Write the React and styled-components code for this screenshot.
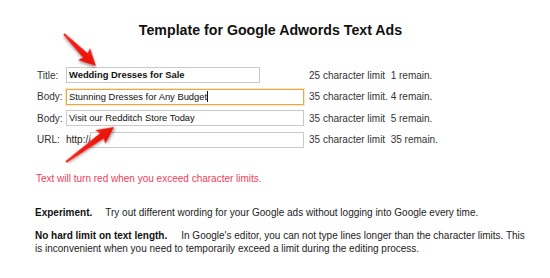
import React from "react";
import styled, { createGlobalStyle } from "styled-components";

const GlobalStyle = createGlobalStyle`
  html, body {
    margin: 0;
    padding: 0;
    background: #fff;
  }
  body {
    font-family: "Liberation Sans", Arial, sans-serif;
    color: #222;
  }
`;

const Page = styled.div`
  position: relative;
  width: 550px;
  height: 278px;
  overflow: hidden;
  padding-top: 22px;
  box-sizing: border-box;
`;

const Heading = styled.h1`
  margin: 0;
  padding-right: 9px;
  font-size: 14.2px;
  line-height: 16px;
  font-weight: bold;
  text-align: center;
  color: #111;
`;

const Form = styled.div`
  margin: 29px 0 0 37px;
  display: grid;
  grid-template-columns: 29px 238px auto;
  row-gap: 5.5px;
  align-items: center;
`;

const Label = styled.div`
  font-size: 10px;
  color: #333;
`;

const FieldCell = styled.div`
  display: flex;
  align-items: center;
  height: 16px;
`;

const Prefix = styled.span`
  font-size: 10px;
  color: #222;
  width: 24px;
`;

const Field = styled.div`
  box-sizing: border-box;
  height: 16px;
  width: ${(p) => (p.$width ? `${p.$width}px` : "auto")};
  flex: ${(p) => (p.$width ? "none" : "1")};
  border: 1px solid ${(p) => (p.$focused ? "#e9a944" : "#c9c9c9")};
  box-shadow: ${(p) =>
    p.$focused ? "0 0 0 1px rgba(245, 200, 120, 0.45)" : "none"};
  padding: 0 2px;
  font-size: 9.4px;
  line-height: 14px;
  font-weight: ${(p) => (p.$bold ? "bold" : "normal")};
  color: #111;
  white-space: nowrap;
  overflow: hidden;
`;

const Caret = styled.span`
  display: inline-block;
  width: 1px;
  height: 11px;
  background: #111;
  vertical-align: -2px;
`;

const Limit = styled.div`
  padding-left: 5px;
  font-size: 10px;
  color: #333;
  white-space: pre;
`;

const Warning = styled.p`
  margin: 25px 0 0 36px;
  font-size: 10px;
  line-height: 12px;
  color: #f2405a;
`;

const Note = styled.p`
  margin: ${(p) => p.$top}px 22px 0 35px;
  font-size: 10px;
  line-height: 12.5px;
  color: #222;
`;

const Lead = styled.b`
  display: inline-block;
  margin-right: ${(p) => p.$gap}px;
  color: #111;
`;

const Overlay = styled.svg`
  position: absolute;
  left: 0;
  top: 0;
  pointer-events: none;
`;

function Arrow({ x1, y1, x2, y2 }) {
  const dx = x2 - x1;
  const dy = y2 - y1;
  const L = Math.sqrt(dx * dx + dy * dy);
  const angle = (Math.atan2(dy, dx) * 180) / Math.PI;
  const pts = [
    [0, -0.9],
    [L - 15, -3.2],
    [L - 17, -8.5],
    [L, 0],
    [L - 17, 8.5],
    [L - 15, 3.2],
    [0, 0.9],
  ]
    .map((p) => p.join(","))
    .join(" ");
  return (
    <g transform={`translate(${x1} ${y1}) rotate(${angle})`}>
      <polygon points={pts} fill="url(#arrowRed)" filter="url(#arrowShadow)" />
    </g>
  );
}

const rows = [
  { label: "Title:", value: "Wedding Dresses for Sale", width: 194, bold: true, limit: "25 character limit  1 remain." },
  { label: "Body:", value: "Stunning Dresses for Any Budget", focused: true, limit: "35 character limit. 4 remain." },
  { label: "Body:", value: "Visit our Redditch Store Today", limit: "35 character limit  5 remain." },
  { label: "URL:", value: "", prefix: "http://", limit: "35 character limit  35 remain." },
];

export default function App() {
  return (
    <>
      <GlobalStyle />
      <Page>
        <Heading>Template for Google Adwords Text Ads</Heading>
        <Form>
          {rows.map((r, i) => (
            <React.Fragment key={i}>
              <Label>{r.label}</Label>
              <FieldCell>
                {r.prefix && <Prefix>{r.prefix}</Prefix>}
                <Field $width={r.prefix ? undefined : r.width || 238} $bold={r.bold} $focused={r.focused}>
                  {r.value}
                  {r.focused && <Caret />}
                </Field>
              </FieldCell>
              <Limit>{r.limit}</Limit>
            </React.Fragment>
          ))}
        </Form>
        <Warning>Text will turn red when you exceed character limits.</Warning>
        <Note $top={22}>
          <Lead $gap={13}>Experiment.</Lead>
          Try out different wording for your Google ads without logging into Google every time.
        </Note>
        <Note $top={11}>
          <Lead $gap={14}>No hard limit on text length.</Lead>
          In Google's editor, you can not type lines longer than the character limits. This is
          inconvenient when you need to temporarily exceed a limit during the editing process.
        </Note>
        <Overlay width="550" height="278">
          <defs>
            <linearGradient id="arrowRed" x1="0" y1="0" x2="1" y2="1">
              <stop offset="0" stopColor="#ff2a1a" />
              <stop offset="1" stopColor="#e00a0a" />
            </linearGradient>
            <filter id="arrowShadow" x="-30%" y="-30%" width="160%" height="160%">
              <feDropShadow dx="1.5" dy="1.5" stdDeviation="1.2" floodColor="#000" floodOpacity="0.35" />
            </filter>
          </defs>
          <Arrow x1={64} y1={34} x2={96} y2={66} />
          <Arrow x1={66} y1={162} x2={114} y2={127} />
        </Overlay>
      </Page>
    </>
  );
}
